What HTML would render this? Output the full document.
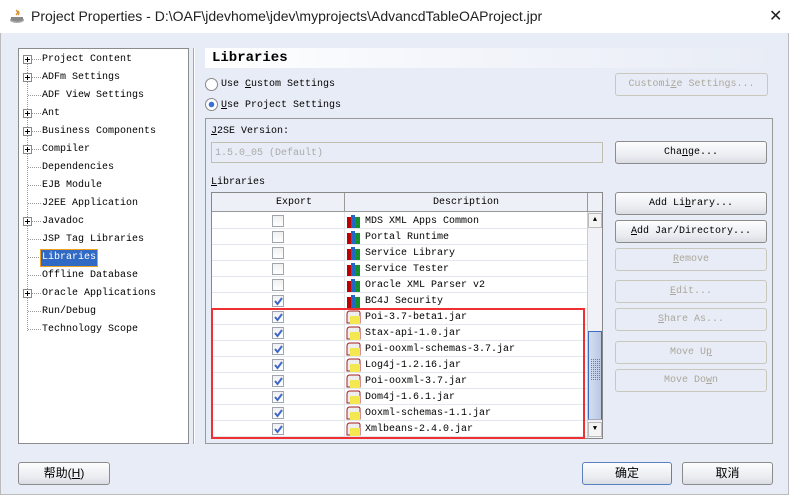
<!DOCTYPE html>
<html><head><meta charset="utf-8"><style>
*{margin:0;padding:0;box-sizing:border-box}
body{width:789px;height:495px;overflow:hidden;background:#e8ecf6;font-family:"Liberation Mono","Noto Sans CJK SC",monospace;font-size:10px;color:#000;position:relative}
.a{position:absolute}
.title{left:0;top:0;width:789px;height:33px;background:#fff;font-family:"Liberation Sans","Noto Sans CJK SC",sans-serif;font-size:14px;color:#222}
.tree{left:18px;top:48px;width:171px;height:396px;background:#fff;border:1px solid #8c8c8c}
.ti{position:absolute;left:23px;white-space:nowrap;line-height:14px}
.pl{position:absolute;left:4px;width:9px;height:9px;border:1px solid #888;background:#fff}
.pl:before{content:"";position:absolute;left:1px;top:3px;width:5px;height:1px;background:#000}
.pl:after{content:"";position:absolute;left:3px;top:1px;width:1px;height:5px;background:#000}
.dot{position:absolute;border-top:1px dotted #999;width:9px}
.btn{position:absolute;border:1px solid #8c8c8c;border-radius:3px;background:linear-gradient(#fdfdfe,#e9ebf0 70%,#d9dce3);text-align:center;line-height:21px;white-space:nowrap}
.dis{border-color:#c8c8bc;background:#e8ecf6;color:#aaa89c}
.row{position:absolute;left:0;width:376px;height:16px;border-bottom:1px solid #e4e6ee}
.cb{position:absolute;left:60px;top:2px;width:12px;height:12px;border:1px solid #a0a4ac;background:linear-gradient(#f0f0f0,#fff)}
.ck{position:absolute;left:1px;top:1px}
.tx{position:absolute;left:153px;top:2px;white-space:nowrap;line-height:14px}
.ib{position:absolute;left:134px;top:1px;width:15px;height:14px}
</style></head><body>
<div class="a title">
<svg class="a" style="left:9px;top:8px" width="16" height="16"><ellipse cx="8" cy="12" rx="7" ry="3" fill="#aaa"/><path d="M2 9h12v3q-6 3-12 0z" fill="#888"/><path d="M7 2q3 2 0 5M9 3q2 2 0 4" stroke="#d68a2a" fill="none" stroke-width="1.3"/></svg>
<div class="a" style="left:31px;top:8px">Project Properties - D:\OAF\jdevhome\jdev\myprojects\AdvancdTableOAProject.jpr</div>
<div class="a" style="left:769px;top:6px;font-size:16px">✕</div>
</div>
<div class="a" style="left:0;top:33px;width:789px;height:462px;border:1px solid #bbb;border-top:none"></div>

<div class="a tree">
<div class="a" style="left:8px;top:10px;height:272px;border-left:1px dotted #999"></div>
<div class="pl" style="top:6px"></div><div class="dot" style="left:13px;top:10px"></div><div class="ti" style="top:4px">Project Content</div>
<div class="pl" style="top:24px"></div><div class="dot" style="left:13px;top:28px"></div><div class="ti" style="top:22px">ADFm Settings</div>
<div class="dot" style="left:9px;top:46px;width:13px"></div><div class="ti" style="top:40px">ADF View Settings</div>
<div class="pl" style="top:60px"></div><div class="dot" style="left:13px;top:64px"></div><div class="ti" style="top:58px">Ant</div>
<div class="pl" style="top:78px"></div><div class="dot" style="left:13px;top:82px"></div><div class="ti" style="top:76px">Business Components</div>
<div class="pl" style="top:96px"></div><div class="dot" style="left:13px;top:100px"></div><div class="ti" style="top:94px">Compiler</div>
<div class="dot" style="left:9px;top:118px;width:13px"></div><div class="ti" style="top:112px">Dependencies</div>
<div class="dot" style="left:9px;top:136px;width:13px"></div><div class="ti" style="top:130px">EJB Module</div>
<div class="dot" style="left:9px;top:154px;width:13px"></div><div class="ti" style="top:148px">J2EE Application</div>
<div class="pl" style="top:168px"></div><div class="dot" style="left:13px;top:172px"></div><div class="ti" style="top:166px">Javadoc</div>
<div class="dot" style="left:9px;top:190px;width:13px"></div><div class="ti" style="top:184px">JSP Tag Libraries</div>
<div class="dot" style="left:9px;top:208px;width:13px"></div><div class="ti" style="top:200px;left:21px;background:#316ac5;color:#fff;border:1px solid #f0a020;padding:1px 1px;line-height:14px">Libraries</div>
<div class="dot" style="left:9px;top:226px;width:13px"></div><div class="ti" style="top:220px">Offline Database</div>
<div class="pl" style="top:240px"></div><div class="dot" style="left:13px;top:244px"></div><div class="ti" style="top:238px">Oracle Applications</div>
<div class="dot" style="left:9px;top:262px;width:13px"></div><div class="ti" style="top:256px">Run/Debug</div>
<div class="dot" style="left:9px;top:280px;width:13px"></div><div class="ti" style="top:274px">Technology Scope</div>
</div>
<div class="a" style="left:193px;top:48px;height:396px;border-left:1px solid #aaa;border-right:1px solid #fff"></div>

<div class="a" style="left:205px;top:48px;width:580px;height:20px;background:linear-gradient(90deg,#fff,#f4f6fb 40%,#e8ecf6)"></div>
<div class="a" style="left:212px;top:50px;font-size:14px;font-weight:bold;font-family:'Liberation Mono',monospace">Libraries</div>

<div class="a" style="left:205px;top:78px;width:13px;height:13px;border-radius:50%;border:1px solid #888;background:#fff"></div>
<div class="a" style="left:221px;top:79px">Use <u>C</u>ustom Settings</div>
<div class="a" style="left:205px;top:98px;width:13px;height:13px;border-radius:50%;border:1px solid #888;background:radial-gradient(#3a6fd8 2.5px,#fff 3px)"></div>
<div class="a" style="left:221px;top:100px"><u>U</u>se Project Settings</div>
<div class="btn dis" style="left:615px;top:73px;width:153px;height:23px">Customi<u>z</u>e Settings...</div>

<div class="a" style="left:205px;top:118px;width:568px;height:326px;border:1px solid #999"></div>
<div class="a" style="left:211px;top:126px"><u>J</u>2SE Version:</div>
<div class="a" style="left:211px;top:142px;width:392px;height:21px;border:1px solid #c0c0b0;color:#aaa;padding:4px 3px;line-height:14px">1.5.0_05 (Default)</div>
<div class="btn" style="left:615px;top:141px;width:152px;height:23px">Cha<u>n</u>ge...</div>
<div class="a" style="left:211px;top:177px"><u>L</u>ibraries</div>

<div class="a" style="left:211px;top:192px;width:392px;height:247px;border:1px solid #888;background:#fff;overflow:hidden">
<div class="a" style="left:0;top:0;width:390px;height:19px;background:#eef0f7;border-bottom:1px solid #999"></div>
<div class="a" style="left:132px;top:0;height:19px;border-left:1px solid #999"></div>
<div class="a" style="left:375px;top:0;height:19px;border-left:1px solid #999"></div>
<div class="a" style="left:64px;top:4px">Export</div>
<div class="a" style="left:221px;top:4px">Description</div>
<div class="a" style="left:132px;top:19px;height:228px;border-left:1px solid #e4e6ee"></div>
<div class="a" style="left:0;top:20px">
<div class="row" style="top:0"><div class="cb"></div><svg class="ib"><rect x="1" y="3" width="4" height="11" fill="#b00"/><rect x="5" y="1" width="4" height="13" fill="#2268c8"/><rect x="9" y="3" width="5" height="11" fill="#18902a"/></svg><div class="tx">MDS XML Apps Common</div></div>
<div class="row" style="top:16px"><div class="cb"></div><svg class="ib"><rect x="1" y="3" width="4" height="11" fill="#b00"/><rect x="5" y="1" width="4" height="13" fill="#2268c8"/><rect x="9" y="3" width="5" height="11" fill="#18902a"/></svg><div class="tx">Portal Runtime</div></div>
<div class="row" style="top:32px"><div class="cb"></div><svg class="ib"><rect x="1" y="3" width="4" height="11" fill="#b00"/><rect x="5" y="1" width="4" height="13" fill="#2268c8"/><rect x="9" y="3" width="5" height="11" fill="#18902a"/></svg><div class="tx">Service Library</div></div>
<div class="row" style="top:48px"><div class="cb"></div><svg class="ib"><rect x="1" y="3" width="4" height="11" fill="#b00"/><rect x="5" y="1" width="4" height="13" fill="#2268c8"/><rect x="9" y="3" width="5" height="11" fill="#18902a"/></svg><div class="tx">Service Tester</div></div>
<div class="row" style="top:64px"><div class="cb"></div><svg class="ib"><rect x="1" y="3" width="4" height="11" fill="#b00"/><rect x="5" y="1" width="4" height="13" fill="#2268c8"/><rect x="9" y="3" width="5" height="11" fill="#18902a"/></svg><div class="tx">Oracle XML Parser v2</div></div>
<div class="row" style="top:80px"><div class="cb"><svg class="ck" width="9" height="9"><path d="M1 4l2.5 3L8 1" stroke="#3a6bc8" stroke-width="2" fill="none"/></svg></div><svg class="ib"><rect x="1" y="3" width="4" height="11" fill="#b00"/><rect x="5" y="1" width="4" height="13" fill="#2268c8"/><rect x="9" y="3" width="5" height="11" fill="#18902a"/></svg><div class="tx">BC4J Security</div></div>
<div class="row" style="top:96px"><div class="cb"><svg class="ck" width="9" height="9"><path d="M1 4l2.5 3L8 1" stroke="#3a6bc8" stroke-width="2" fill="none"/></svg></div><svg class="ib"><path d="M1 13V4q0-3 3-3h8q2 0 2 2v10z" fill="#eee" stroke="#a02020"/><rect x="4" y="6" width="10" height="8" fill="#f4e850"/></svg><div class="tx">Poi-3.7-beta1.jar</div></div>
<div class="row" style="top:112px"><div class="cb"><svg class="ck" width="9" height="9"><path d="M1 4l2.5 3L8 1" stroke="#3a6bc8" stroke-width="2" fill="none"/></svg></div><svg class="ib"><path d="M1 13V4q0-3 3-3h8q2 0 2 2v10z" fill="#eee" stroke="#a02020"/><rect x="4" y="6" width="10" height="8" fill="#f4e850"/></svg><div class="tx">Stax-api-1.0.jar</div></div>
<div class="row" style="top:128px"><div class="cb"><svg class="ck" width="9" height="9"><path d="M1 4l2.5 3L8 1" stroke="#3a6bc8" stroke-width="2" fill="none"/></svg></div><svg class="ib"><path d="M1 13V4q0-3 3-3h8q2 0 2 2v10z" fill="#eee" stroke="#a02020"/><rect x="4" y="6" width="10" height="8" fill="#f4e850"/></svg><div class="tx">Poi-ooxml-schemas-3.7.jar</div></div>
<div class="row" style="top:144px"><div class="cb"><svg class="ck" width="9" height="9"><path d="M1 4l2.5 3L8 1" stroke="#3a6bc8" stroke-width="2" fill="none"/></svg></div><svg class="ib"><path d="M1 13V4q0-3 3-3h8q2 0 2 2v10z" fill="#eee" stroke="#a02020"/><rect x="4" y="6" width="10" height="8" fill="#f4e850"/></svg><div class="tx">Log4j-1.2.16.jar</div></div>
<div class="row" style="top:160px"><div class="cb"><svg class="ck" width="9" height="9"><path d="M1 4l2.5 3L8 1" stroke="#3a6bc8" stroke-width="2" fill="none"/></svg></div><svg class="ib"><path d="M1 13V4q0-3 3-3h8q2 0 2 2v10z" fill="#eee" stroke="#a02020"/><rect x="4" y="6" width="10" height="8" fill="#f4e850"/></svg><div class="tx">Poi-ooxml-3.7.jar</div></div>
<div class="row" style="top:176px"><div class="cb"><svg class="ck" width="9" height="9"><path d="M1 4l2.5 3L8 1" stroke="#3a6bc8" stroke-width="2" fill="none"/></svg></div><svg class="ib"><path d="M1 13V4q0-3 3-3h8q2 0 2 2v10z" fill="#eee" stroke="#a02020"/><rect x="4" y="6" width="10" height="8" fill="#f4e850"/></svg><div class="tx">Dom4j-1.6.1.jar</div></div>
<div class="row" style="top:192px"><div class="cb"><svg class="ck" width="9" height="9"><path d="M1 4l2.5 3L8 1" stroke="#3a6bc8" stroke-width="2" fill="none"/></svg></div><svg class="ib"><path d="M1 13V4q0-3 3-3h8q2 0 2 2v10z" fill="#eee" stroke="#a02020"/><rect x="4" y="6" width="10" height="8" fill="#f4e850"/></svg><div class="tx">Ooxml-schemas-1.1.jar</div></div>
<div class="row" style="top:208px"><div class="cb"><svg class="ck" width="9" height="9"><path d="M1 4l2.5 3L8 1" stroke="#3a6bc8" stroke-width="2" fill="none"/></svg></div><svg class="ib"><path d="M1 13V4q0-3 3-3h8q2 0 2 2v10z" fill="#eee" stroke="#a02020"/><rect x="4" y="6" width="10" height="8" fill="#f4e850"/></svg><div class="tx">Xmlbeans-2.4.0.jar</div></div>
</div>
<div class="a" style="left:375px;top:19px;width:15px;height:226px;background:#f0f2f8;border-left:1px solid #ccc"></div>
<div class="a" style="left:376px;top:20px;width:14px;height:15px;background:#f4f4f4;border:1px solid #bbb;text-align:center;font-size:7px;line-height:13px">▲</div>
<div class="a" style="left:376px;top:138px;width:14px;height:89px;background:linear-gradient(90deg,#d4def0,#b8c8e4);border:1px solid #3c6cc0;border-bottom-color:#aab"></div>
<svg class="a" style="left:379px;top:166px" width="9" height="22"><defs><pattern id="p" width="2" height="2" patternUnits="userSpaceOnUse"><rect width="1" height="1" fill="#5a7ccc"/></pattern></defs><rect width="9" height="22" fill="url(#p)"/></svg>
<div class="a" style="left:376px;top:229px;width:14px;height:15px;background:#f4f4f4;border:1px solid #bbb;text-align:center;font-size:7px;line-height:13px">▼</div>
</div>
<div class="a" style="left:211px;top:308px;width:374px;height:131px;border:2px solid #f03030"></div>

<div class="btn" style="left:615px;top:192px;width:152px;height:23px">Add Li<u>b</u>rary...</div>
<div class="btn" style="left:615px;top:220px;width:152px;height:23px"><u>A</u>dd Jar/Directory...</div>
<div class="btn dis" style="left:615px;top:248px;width:152px;height:23px"><u>R</u>emove</div>
<div class="btn dis" style="left:615px;top:280px;width:152px;height:23px"><u>E</u>dit...</div>
<div class="btn dis" style="left:615px;top:308px;width:152px;height:23px"><u>S</u>hare As...</div>
<div class="btn dis" style="left:615px;top:341px;width:152px;height:23px">Move U<u>p</u></div>
<div class="btn dis" style="left:615px;top:369px;width:152px;height:23px">Move Do<u>w</u>n</div>

<div class="btn" style="left:18px;top:462px;width:92px;height:23px;font-size:12px;font-family:'Liberation Sans','Noto Sans CJK SC',sans-serif">帮助(<u>H</u>)</div>
<div class="btn" style="left:582px;top:462px;width:90px;height:23px;border-color:#5a80c0;font-size:12px;font-family:'Liberation Sans','Noto Sans CJK SC',sans-serif">确定</div>
<div class="btn" style="left:682px;top:462px;width:91px;height:23px;font-size:12px;font-family:'Liberation Sans','Noto Sans CJK SC',sans-serif">取消</div>
</body></html>
